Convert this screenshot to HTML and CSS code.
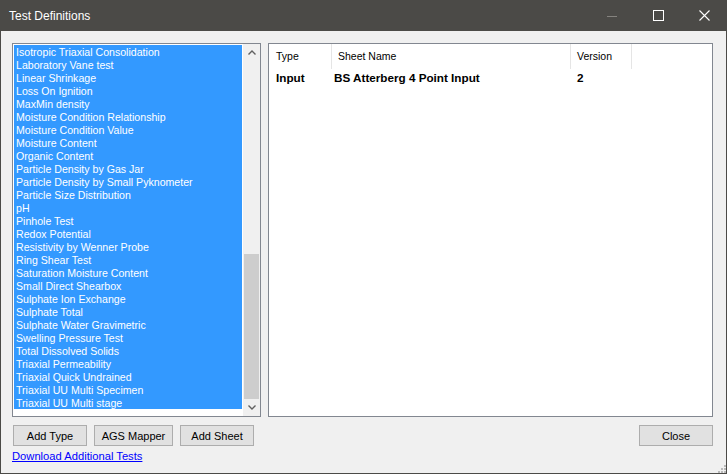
FILE: index.html
```html
<!DOCTYPE html>
<html lang="en">
<head>
    <meta charset="UTF-8">
    <title>Test Definitions</title>
    <link rel="stylesheet" href="styles.css">
</head>
<body>
    <div class="window">
        <div class="titlebar">
            <span class="title">Test Definitions</span>
            <div class="controls">
                <span class="ctl">
                    <svg width="10" height="10" viewBox="0 0 10 10"><line x1="0" y1="5.5" x2="10" y2="5.5" stroke="#85837f" stroke-width="1"/></svg>
                </span>
                <span class="ctl">
                    <svg width="11" height="11" viewBox="0 0 11 11"><rect x="0.5" y="0.5" width="10" height="10" fill="none" stroke="#fff" stroke-width="1"/></svg>
                </span>
                <span class="ctl">
                    <svg width="11" height="11" viewBox="0 0 11 11"><path d="M0.5 0.5 L10.5 10.5 M10.5 0.5 L0.5 10.5" stroke="#fff" stroke-width="1.1"/></svg>
                </span>
            </div>
        </div>

        <div class="content">
            <div class="main">
                <div class="listbox">
                    <ul class="items">
                        <li>Isotropic Triaxial Consolidation</li>
                        <li>Laboratory Vane test</li>
                        <li>Linear Shrinkage</li>
                        <li>Loss On Ignition</li>
                        <li>MaxMin density</li>
                        <li>Moisture Condition Relationship</li>
                        <li>Moisture Condition Value</li>
                        <li>Moisture Content</li>
                        <li>Organic Content</li>
                        <li>Particle Density by Gas Jar</li>
                        <li>Particle Density by Small Pyknometer</li>
                        <li>Particle Size Distribution</li>
                        <li>pH</li>
                        <li>Pinhole Test</li>
                        <li>Redox Potential</li>
                        <li>Resistivity by Wenner Probe</li>
                        <li>Ring Shear Test</li>
                        <li>Saturation Moisture Content</li>
                        <li>Small Direct Shearbox</li>
                        <li>Sulphate Ion Exchange</li>
                        <li>Sulphate Total</li>
                        <li>Sulphate Water Gravimetric</li>
                        <li>Swelling Pressure Test</li>
                        <li>Total Dissolved Solids</li>
                        <li>Triaxial Permeability</li>
                        <li>Triaxial Quick Undrained</li>
                        <li>Triaxial UU Multi Specimen</li>
                        <li>Triaxial UU Multi stage</li>
                    </ul>
                    <div class="scrollbar">
                        <div class="arrow">
                            <svg width="8" height="5" viewBox="0 0 8 5"><path d="M0.5 4.5 L4 1 L7.5 4.5" fill="none" stroke="#606060" stroke-width="1.4"/></svg>
                        </div>
                        <div class="track"><div class="thumb"></div></div>
                        <div class="arrow">
                            <svg width="8" height="5" viewBox="0 0 8 5"><path d="M0.5 0.5 L4 4 L7.5 0.5" fill="none" stroke="#606060" stroke-width="1.4"/></svg>
                        </div>
                    </div>
                </div>

                <div class="panel">
                    <div class="row header">
                        <div class="cell c-type">Type</div>
                        <div class="cell c-name">Sheet Name</div>
                        <div class="cell c-ver">Version</div>
                    </div>
                    <div class="row data">
                        <div class="cell c-type">Input</div>
                        <div class="cell c-name">BS Atterberg 4 Point Input</div>
                        <div class="cell c-ver">2</div>
                    </div>
                </div>
            </div>

            <div class="actions">
                <button type="button" class="btn">Add Type</button>
                <button type="button" class="btn wide">AGS Mapper</button>
                <button type="button" class="btn">Add Sheet</button>
                <button type="button" class="btn close">Close</button>
            </div>
            <a class="link" href="#">Download Additional Tests</a>

            <svg class="grip" width="8" height="8" viewBox="0 0 8 8">
                <rect x="6" y="0" width="2" height="2" fill="#b9b9b9"/>
                <rect x="3" y="3" width="2" height="2" fill="#b9b9b9"/>
                <rect x="6" y="3" width="2" height="2" fill="#b9b9b9"/>
                <rect x="0" y="6" width="2" height="2" fill="#b9b9b9"/>
                <rect x="3" y="6" width="2" height="2" fill="#b9b9b9"/>
                <rect x="6" y="6" width="2" height="2" fill="#b9b9b9"/>
            </svg>
        </div>
    </div>
</body>
</html>
```

FILE: styles.css
```css
body {
    margin: 0;
    font-family: "Liberation Sans", Arial, sans-serif;
}

.window {
    width: 727px;
    height: 474px;
    display: flex;
    flex-direction: column;
}

.titlebar {
    height: 31px;
    background: #4b4a47;
    color: #fff;
    display: flex;
    align-items: center;
}
.title {
    flex: 1;
    padding-left: 9px;
    font-size: 12px;
}
.controls {
    display: flex;
    align-self: stretch;
}
.ctl {
    width: 46px;
    display: flex;
    align-items: center;
    justify-content: center;
}

.content {
    flex: 1;
    position: relative;
    background: #f0f0f0;
    border: 1px solid #4b4a47;
    border-top: 0;
    padding: 12px 13px 0 11px;
}

.main {
    display: flex;
    gap: 7px;
    height: 374px;
}

/* list of test types */
.listbox {
    width: 249px;
    box-sizing: border-box;
    border: 1px solid #828790;
    background: #fff;
    display: flex;
}
.items {
    flex: 1;
    list-style: none;
    margin: 0;
    padding: 1px;
    font-size: 10.6px;
    color: #fff;
}
.items li {
    height: 13px;
    line-height: 15px;
    padding-left: 2px;
    background: #3399ff;
    white-space: nowrap;
}

.scrollbar {
    width: 17px;
    background: #f0f0f0;
    display: flex;
    flex-direction: column;
}
.arrow {
    height: 17px;
    display: flex;
    align-items: center;
    justify-content: center;
}
.track {
    flex: 1;
    display: flex;
    flex-direction: column;
    justify-content: flex-end;
}
.thumb {
    height: 145px;
    margin: 0 1px;
    background: #cdcdcd;
}

/* sheet list */
.panel {
    flex: 1;
    border: 1px solid #828790;
    background: #fff;
}
.row {
    display: grid;
    grid-template-columns: 63px 239px 61px;
}
.header {
    height: 25px;
    font-size: 10.5px;
    line-height: 25px;
    color: #000;
}
.header .cell {
    border-right: 1px solid #e5e5e5;
    padding-left: 6px;
}
.header .c-type {
    padding-left: 7px;
}
.data {
    height: 18px;
    line-height: 18px;
    font-size: 11.7px;
    font-weight: bold;
}
.data .c-type {
    padding-left: 7px;
}
.data .c-name {
    padding-left: 2px;
}
.data .c-ver {
    padding-left: 6px;
}

/* buttons */
.actions {
    display: flex;
    gap: 7px;
    margin-top: 8px;
    padding-left: 1px;
}
.btn {
    width: 74px;
    height: 21px;
    box-sizing: border-box;
    border: 1px solid #adadad;
    background: #e1e1e1;
    font-family: "Liberation Sans", Arial, sans-serif;
    font-size: 11px;
    color: #000;
    padding: 0;
}
.btn.wide {
    width: 79px;
}
.btn.close {
    margin-left: auto;
}

.link {
    display: inline-block;
    margin-top: 3px;
    font-size: 11.2px;
    line-height: 13px;
    color: #0000ff;
}

.grip {
    position: absolute;
    right: 0;
    bottom: 0;
}
```
